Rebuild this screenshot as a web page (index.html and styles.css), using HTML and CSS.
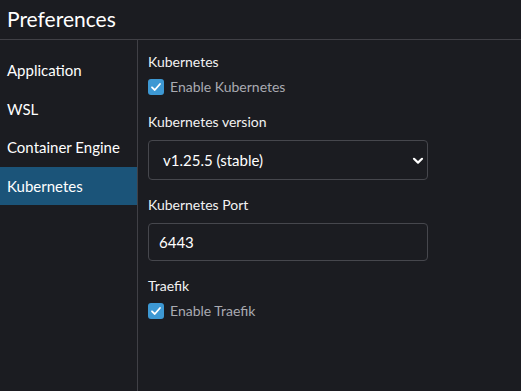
FILE: index.html
```html
<!DOCTYPE html>
<html lang="en">
<head>
<meta charset="utf-8">
<title>Preferences</title>
<link rel="stylesheet" href="styles.css">
</head>
<body>
<div class="app">
  <header class="header">
    <h1 class="title">Preferences</h1>
  </header>
  <div class="main">
    <nav class="sidebar">
      <div class="nav-item">Application</div>
      <div class="nav-item">WSL</div>
      <div class="nav-item">Container Engine</div>
      <div class="nav-item active">Kubernetes</div>
    </nav>
    <section class="content">
      <div class="group">
        <div class="label">Kubernetes</div>
        <label class="check-row">
          <span class="check-box">
            <svg width="16" height="16" viewBox="0 0 16 16"><path d="M4 8.3 L6.8 11 L12 5" fill="none" stroke="#fff" stroke-width="1.8" stroke-linecap="round" stroke-linejoin="round"/></svg>
          </span>
          <span class="check-text">Enable Kubernetes</span>
        </label>
      </div>
      <div class="group">
        <div class="label">Kubernetes version</div>
        <div class="select-wrap">
          <div class="select">v1.25.5 (stable)</div>
          <svg class="chevron" width="12" height="8" viewBox="0 0 12 8"><path d="M2 1.8 L6 5.6 L10 1.8" fill="none" stroke="#fff" stroke-width="2.2" stroke-linecap="round" stroke-linejoin="round"/></svg>
        </div>
      </div>
      <div class="group">
        <div class="label">Kubernetes Port</div>
        <div class="input">6443</div>
      </div>
      <div class="group">
        <div class="label">Traefik</div>
        <label class="check-row">
          <span class="check-box">
            <svg width="16" height="16" viewBox="0 0 16 16"><path d="M4 8.3 L6.8 11 L12 5" fill="none" stroke="#fff" stroke-width="1.8" stroke-linecap="round" stroke-linejoin="round"/></svg>
          </span>
          <span class="check-text">Enable Traefik</span>
        </label>
      </div>
    </section>
  </div>
</div>
</body>
</html>
```
FILE: styles.css
```css
html, body {
  margin: 0;
  padding: 0;
  height: 100%;
  background: #1b1c21;
  color: #f2f2f2;
  font-family: Lato, "Open Sans", sans-serif;
}
.app {
  display: flex;
  flex-direction: column;
  height: 100%;
}
.header {
  height: 39px;
  border-bottom: 1px solid #404046;
  flex: none;
}
.title {
  margin: 0;
  padding-left: 7px;
  font-size: 21px;
  font-weight: 400;
  line-height: 37px;
  color: #ffffff;
}
.main {
  flex: 1;
  display: flex;
}
.sidebar {
  width: 137px;
  border-right: 1px solid #404046;
  padding-top: 11.25px;
  flex: none;
}
.nav-item {
  height: 38.5px;
  line-height: 38.5px;
  padding-left: 7px;
  font-size: 15px;
  color: #ffffff;
  white-space: nowrap;
}
.nav-item.active {
  background: #1b5479;
}
.content {
  flex: 1;
  padding: 12.3px 0 0 10px;
}
.group {
  margin-bottom: 15px;
}
.label {
  font-size: 14px;
  line-height: 20px;
  color: #f2f2f2;
  margin-bottom: 8px;
}
.check-row {
  display: flex;
  align-items: center;
  gap: 6px;
  height: 20px;
  margin-top: -3px;
  font-size: 14px;
  line-height: 20px;
}
.check-box {
  width: 16px;
  height: 16px;
  border-radius: 3px;
  background: #3d98d3;
  display: flex;
}
.check-text {
  color: #a9aab1;
}
.select-wrap {
  position: relative;
  width: 280px;
}
.select {
  box-sizing: border-box;
  height: 40px;
  border: 1px solid #46474d;
  border-radius: 4px;
  padding-left: 14px;
  font-size: 15px;
  line-height: 38px;
  color: #ffffff;
}
.chevron {
  position: absolute;
  right: 4px;
  top: 17px;
}
.input {
  box-sizing: border-box;
  width: 280px;
  height: 38px;
  border: 1px solid #46474d;
  border-radius: 4px;
  padding-left: 10px;
  font-size: 15px;
  line-height: 36px;
  color: #ffffff;
}
```
